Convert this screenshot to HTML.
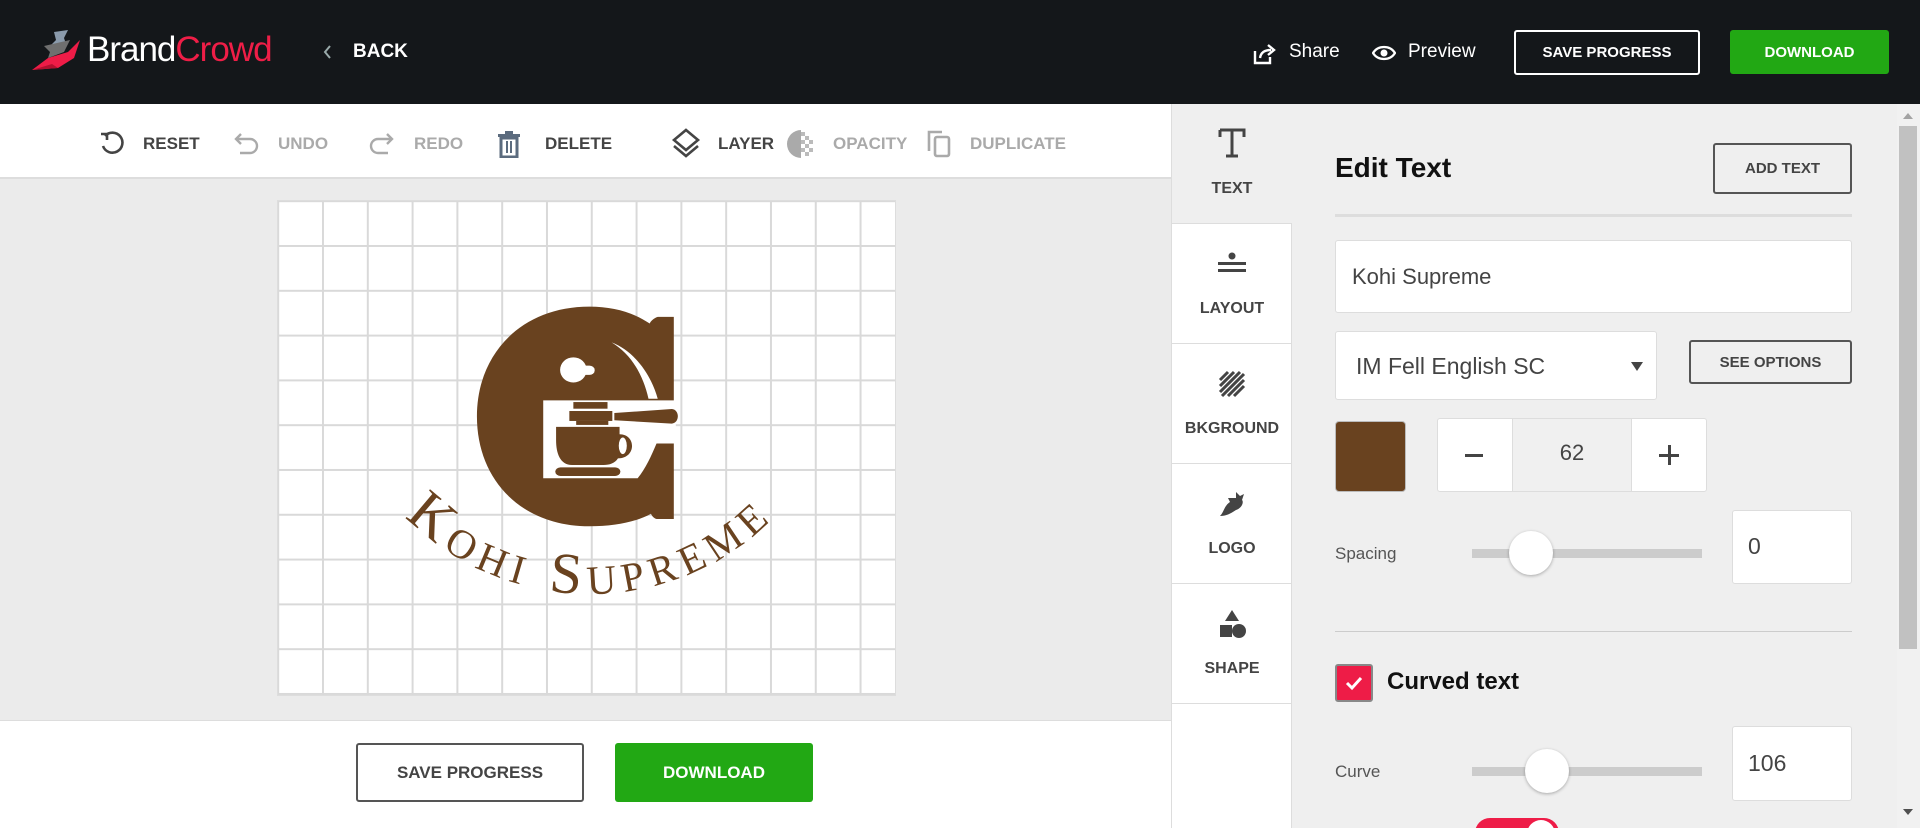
<!DOCTYPE html>
<html style="overflow:hidden;width:1920px;height:828px"><head><meta charset="utf-8"><style>
*{box-sizing:border-box;margin:0;padding:0}
body{width:1920px;height:828px;overflow:hidden;font-family:"Liberation Sans",sans-serif;background:#ebebeb;position:relative}
.abs{position:absolute}
.hdr{left:0;top:0;width:1920px;height:104px;background:#14171a}
.tb{left:0;top:104px;width:1171px;height:75px;background:#fff;border-bottom:2px solid #ddd}
.tbi{position:absolute;top:131px;font-size:17px;font-weight:bold;color:#444;line-height:26px}
.dis{color:#aaa}
.btn{position:absolute;display:flex;align-items:center;justify-content:center;font-weight:bold;border-radius:3px}
.tabs{left:1171px;top:104px;width:121px;height:724px;background:#fff;border-left:1px solid #ddd;border-right:1px solid #ddd}
.tab{position:absolute;left:0;width:120px;height:120px;border-bottom:1px solid #ddd;text-align:center}
.tab span{position:absolute;left:0;right:0;top:76px;font-size:16px;font-weight:bold;color:#444}
.tab svg{position:absolute;left:42px;top:22px}
.panel{left:1292px;top:104px;width:605px;height:724px;background:#efefef}
.box{position:absolute;background:#fff;border:1px solid #ddd;border-radius:3px}
</style></head><body>
<div class="abs hdr"></div>
<svg class="abs" style="left:28px;top:28px" width="56" height="48" viewBox="0 0 56 48">
<path d="M26 4 L40 2 L36 10 L38 16 L22 18 L28 12 Z" fill="#8a9aab"/>
<path d="M16 18 L42 12 L36 24 L20 30 L22 24 Z" fill="#6f6f6f"/>
<path d="M4 42 L20 30 L40 24 L52 12 L46 30 L30 40 Z" fill="#ee1c47"/>
<path d="M4 42 L24 36 L30 40 Z" fill="#b3102f"/>
</svg>
<div class="abs" style="left:87px;top:30px;font-size:35px;color:#fff;letter-spacing:-1px">Brand<span style="color:#ef1e47">Crowd</span></div>
<svg class="abs" style="left:322px;top:44px" width="10" height="16"><path d="M8 2 L3 8 L8 14" stroke="#9aa" stroke-width="2" fill="none"/></svg>
<div class="abs" style="left:353px;top:41px;font-size:19px;font-weight:bold;color:#fff">BACK</div>
<svg class="abs" style="left:1253px;top:43px" width="24" height="22" viewBox="0 0 24 22"><path d="M2 8 V20 H17 V14" stroke="#fff" stroke-width="2.4" fill="none"/><path d="M7 15 C8 9 12 7 18 7" stroke="#fff" stroke-width="2.4" fill="none"/><path d="M15 2 L21 7 L15 12" stroke="#fff" stroke-width="2.4" fill="none"/></svg>
<div class="abs" style="left:1289px;top:41px;font-size:19px;color:#fff">Share</div>
<svg class="abs" style="left:1372px;top:44px" width="24" height="18" viewBox="0 0 24 18"><path d="M1 9 C6 1 18 1 23 9 C18 17 6 17 1 9 Z" stroke="#fff" stroke-width="2.2" fill="none"/><circle cx="12" cy="9" r="3.5" fill="#fff"/></svg>
<div class="abs" style="left:1408px;top:41px;font-size:19px;color:#fff">Preview</div>
<div class="btn" style="left:1514px;top:30px;width:186px;height:45px;border:2px solid #fff;color:#fff;font-size:15px">SAVE PROGRESS</div>
<div class="btn" style="left:1730px;top:30px;width:159px;height:44px;background:#22a814;color:#fff;font-size:15px">DOWNLOAD</div>

<div class="abs tb"></div>
<svg class="abs" style="left:99px;top:130px" width="26" height="28" viewBox="0 0 26 28"><path d="M6 6 A10 10 0 1 1 4 16" stroke="#444" stroke-width="2.6" fill="none"/><path d="M2 4 L8 4 L8 10" stroke="#444" stroke-width="2.6" fill="none"/></svg>
<div class="tbi" style="left:143px">RESET</div>
<svg class="abs" style="left:233px;top:132px" width="28" height="24" viewBox="0 0 28 24"><path d="M8 2 L3 7 L8 12" stroke="#aaa" stroke-width="2.4" fill="none"/><path d="M3 7 H17 A7 7 0 0 1 17 21 H7" stroke="#aaa" stroke-width="2.4" fill="none"/></svg>
<div class="tbi dis" style="left:278px">UNDO</div>
<svg class="abs" style="left:367px;top:132px" width="28" height="24" viewBox="0 0 28 24"><path d="M20 2 L25 7 L20 12" stroke="#aaa" stroke-width="2.4" fill="none"/><path d="M25 7 H11 A7 7 0 0 0 11 21 H21" stroke="#aaa" stroke-width="2.4" fill="none"/></svg>
<div class="tbi dis" style="left:414px">REDO</div>
<svg class="abs" style="left:497px;top:130px" width="24" height="28" viewBox="0 0 24 28"><rect x="8" y="1" width="8" height="4" fill="#5b6b7e"/><rect x="1" y="4" width="22" height="3" fill="#5b6b7e"/><rect x="4" y="8" width="16" height="19" fill="none" stroke="#5b6b7e" stroke-width="3"/><rect x="9" y="11" width="2" height="12" fill="#5b6b7e"/><rect x="13" y="11" width="2" height="12" fill="#5b6b7e"/></svg>
<div class="tbi" style="left:545px">DELETE</div>
<svg class="abs" style="left:671px;top:128px" width="30" height="32" viewBox="0 0 30 32"><path d="M15 2 L27 12 L15 22 L3 12 Z" stroke="#444" stroke-width="2.6" fill="none"/><path d="M3 18 L15 28 L27 18" stroke="#444" stroke-width="2.6" fill="none"/></svg>
<div class="tbi" style="left:718px">LAYER</div>
<svg class="abs" style="left:786px;top:129px" width="30" height="30" viewBox="0 0 30 30"><path d="M15 1 A14 14 0 0 0 15 29 Z" fill="#aaa"/><g fill="#bbb"><rect x="15" y="3" width="4" height="4"/><rect x="19" y="7" width="4" height="4"/><rect x="15" y="11" width="4" height="4"/><rect x="23" y="11" width="4" height="4"/><rect x="19" y="15" width="4" height="4"/><rect x="15" y="19" width="4" height="4"/><rect x="23" y="19" width="4" height="4"/><rect x="19" y="23" width="4" height="4"/></g></svg>
<div class="tbi dis" style="left:833px">OPACITY</div>
<svg class="abs" style="left:926px;top:129px" width="26" height="30" viewBox="0 0 26 30"><path d="M3 22 V3 H16" stroke="#aaa" stroke-width="2.6" fill="none"/><rect x="9" y="8" width="14" height="19" rx="2" stroke="#aaa" stroke-width="2.6" fill="none"/></svg>
<div class="tbi dis" style="left:970px">DUPLICATE</div>

<div class="abs" style="left:277px;top:200px;width:619px;height:496px;border:1px solid #ddd;background-color:#fff;background-image:linear-gradient(#d9d9d9 2px,transparent 2px),linear-gradient(90deg,#d9d9d9 2px,transparent 2px);background-size:44.8px 44.8px;background-position:0 44px,44px 0"></div>
<svg class="abs" style="left:0;top:0" width="1171" height="720">
<g transform="translate(270,195) scale(0.4018,0.3313)" fill="#69421f">
<path d="M1000 368 L965 368 C955 372 948 380 945 388 C905 355 855 337 795 337 C625 337 515 480 515 668 C515 860 625 1000 795 1000 C860 1000 915 985 948 962 C952 972 958 978 965 978 L1005 978 L1005 368 Z"/>
<path fill="#fff" d="M680 620 L1010 620 L1010 750 L962 750 C948 790 935 825 915 855 L680 855 Z"/>
<path fill="#fff" d="M850 445 C905 470 948 540 965 615 L942 615 C928 540 898 480 850 445 Z"/>
<ellipse cx="755" cy="528" rx="33" ry="38" fill="#fff"/><rect x="770" y="515" width="38" height="28" rx="13" fill="#fff"/>
<rect x="755" y="625" width="85" height="20"/><rect x="745" y="652" width="107" height="30"/><rect x="762" y="682" width="80" height="12"/>
<path d="M857 658 L1000 646 C1020 648 1020 688 1000 690 L857 680 Z"/>
<path d="M712 700 L870 700 L870 722 C912 722 912 795 866 795 C858 810 845 815 830 815 L752 815 C722 815 712 780 712 740 Z"/>
<ellipse cx="878" cy="757" rx="10" ry="25" fill="#fff"/>
<rect x="710" y="822" width="162" height="26" rx="13"/>
</g>
<defs><path id="arc" d="M 331 335 A 259 259 0 0 0 849 335"/></defs>
<text font-family="Liberation Serif,serif" font-size="58" fill="#69421f" letter-spacing="7" style="font-variant:small-caps" text-anchor="middle"><textPath href="#arc" startOffset="50%">Kohi Supreme</textPath></text>
</svg>

<div class="abs" style="left:0;top:720px;width:1171px;height:108px;background:#fff;border-top:1px solid #ddd"></div>
<div class="btn" style="left:356px;top:743px;width:228px;height:59px;border:2px solid #555;color:#444;font-size:17px">SAVE PROGRESS</div>
<div class="btn" style="left:615px;top:743px;width:198px;height:59px;background:#22a814;color:#fff;font-size:17px">DOWNLOAD</div>

<div class="abs tabs">
<div class="tab" style="top:0;background:#efefef"><svg width="36" height="36" viewBox="0 0 36 36"><path d="M6 4 H30 V11 M6 4 V11 M18 4 V30 M12 30 H24" stroke="#444" stroke-width="3" fill="none"/></svg><span>TEXT</span></div>
<div class="tab" style="top:120px"><svg width="36" height="36" viewBox="0 0 36 36"><circle cx="18" cy="10" r="3.5" fill="#444"/><rect x="4" y="16" width="28" height="3" fill="#444"/><rect x="4" y="23" width="28" height="3" fill="#444"/></svg><span>LAYOUT</span></div>
<div class="tab" style="top:240px"><svg width="36" height="36" viewBox="0 0 36 36"><path d="M6 14 L14 6 M6 20 L20 6 M6 26 L26 6 M8 30 L30 8 M14 30 L30 14 M20 30 L30 20" stroke="#444" stroke-width="3"/></svg><span>BKGROUND</span></div>
<div class="tab" style="top:360px"><svg width="36" height="36" viewBox="0 0 36 36"><path d="M6 30 C10 26 10 20 16 16 L14 12 L22 12 L22 6 L26 10 L30 8 L28 14 C30 16 28 22 22 24 C16 28 12 30 6 30 Z" fill="#444"/></svg><span>LOGO</span></div>
<div class="tab" style="top:480px"><svg width="36" height="36" viewBox="0 0 36 36"><path d="M18 4 L25 15 L11 15 Z" fill="#444"/><rect x="6" y="19" width="12" height="12" fill="#444"/><circle cx="25" cy="25" r="7" fill="#444"/></svg><span>SHAPE</span></div>
</div>

<div class="abs panel"></div>
<div class="abs" style="left:1897px;top:104px;width:23px;height:724px;background:#f1f1f1"></div>
<div class="abs" style="left:1899px;top:126px;width:18px;height:523px;background:#c1c1c1"></div>
<div class="abs" style="left:1903px;top:113px;border:5px solid transparent;border-bottom:6px solid #a3a3a3;border-top:0"></div>
<div class="abs" style="left:1903px;top:809px;border:5px solid transparent;border-top:6px solid #505050;border-bottom:0"></div>

<div class="abs" style="left:1335px;top:152px;font-size:28px;font-weight:bold;color:#111">Edit Text</div>
<div class="btn" style="left:1713px;top:143px;width:139px;height:51px;border:2px solid #555;color:#444;font-size:15px">ADD TEXT</div>
<div class="abs" style="left:1335px;top:214px;width:517px;height:3px;background:#ddd"></div>
<div class="box" style="left:1335px;top:240px;width:517px;height:73px"></div>
<div class="abs" style="left:1352px;top:264px;font-size:22px;color:#444">Kohi Supreme</div>
<div class="box" style="left:1335px;top:331px;width:322px;height:69px"></div>
<div class="abs" style="left:1356px;top:353px;font-size:23px;color:#444">IM Fell English SC</div>
<div class="abs" style="left:1631px;top:362px;border:6px solid transparent;border-top:9px solid #444;border-bottom:0"></div>
<div class="btn" style="left:1689px;top:340px;width:163px;height:44px;border:2px solid #555;color:#444;font-size:15px">SEE OPTIONS</div>
<div class="abs" style="left:1335px;top:421px;width:71px;height:71px;background:#69421f;border-radius:4px;border:1px solid #bbb"></div>
<div class="box" style="left:1437px;top:418px;width:270px;height:74px"></div>
<div class="abs" style="left:1512px;top:419px;width:120px;height:72px;background:#f0f0f0;border-left:1px solid #ddd;border-right:1px solid #ddd"></div>
<div class="abs" style="left:1465px;top:454px;width:18px;height:3px;background:#444"></div>
<div class="abs" style="left:1547px;top:440px;width:50px;text-align:center;font-size:22px;color:#444">62</div>
<div class="abs" style="left:1659px;top:454px;width:20px;height:2.5px;background:#444"></div>
<div class="abs" style="left:1668px;top:445px;width:2.5px;height:20px;background:#444"></div>
<div class="abs" style="left:1335px;top:544px;font-size:17px;color:#555">Spacing</div>
<div class="abs" style="left:1472px;top:549px;width:230px;height:9px;background:#ccc"></div>
<div class="abs" style="left:1509px;top:531px;width:44px;height:44px;border-radius:50%;background:#fff;box-shadow:0 1px 3px rgba(0,0,0,.3)"></div>
<div class="box" style="left:1732px;top:510px;width:120px;height:74px"></div>
<div class="abs" style="left:1748px;top:533px;font-size:23px;color:#444">0</div>
<div class="abs" style="left:1335px;top:631px;width:517px;height:1px;background:#ccc"></div>
<div class="abs" style="left:1335px;top:664px;width:38px;height:38px;background:#ee1c47;border:2px solid #888;border-radius:3px"></div>
<svg class="abs" style="left:1343px;top:673px" width="22" height="20"><path d="M4 10 L9 15 L18 5" stroke="#fff" stroke-width="3" fill="none"/></svg>
<div class="abs" style="left:1387px;top:668px;font-size:24px;font-weight:bold;color:#111">Curved text</div>
<div class="abs" style="left:1335px;top:762px;font-size:17px;color:#555">Curve</div>
<div class="abs" style="left:1472px;top:767px;width:230px;height:9px;background:#ccc"></div>
<div class="abs" style="left:1525px;top:749px;width:44px;height:44px;border-radius:50%;background:#fff;box-shadow:0 1px 3px rgba(0,0,0,.3)"></div>
<div class="box" style="left:1732px;top:726px;width:120px;height:75px"></div>
<div class="abs" style="left:1748px;top:750px;font-size:23px;color:#444">106</div>
<div class="abs" style="left:1475px;top:818px;width:84px;height:10px;overflow:hidden"><div style="width:84px;height:30px;border-radius:15px;background:#ee1c47;position:relative"><div style="position:absolute;left:52px;top:2px;width:28px;height:28px;border-radius:50%;background:#fff"></div></div></div>
</body></html>
